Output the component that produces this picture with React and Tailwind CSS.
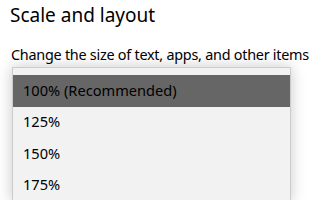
import React from 'react';

const options = ['100% (Recommended)', '125%', '150%', '175%'];

export default function App() {
    return (
        <div className="w-[317px] h-[200px] overflow-hidden bg-white text-black" style={{ fontFamily: '"Noto Sans", "Open Sans", sans-serif' }}>
            <div className="pl-[10px] pt-[1px] text-[19px] leading-[28px]">Scale and layout</div>
            <div className="pl-[11px] mt-[16px] text-[14.4px] leading-[20px] tracking-[-0.25px] whitespace-nowrap">
                Change the size of text, apps, and other items
            </div>
            <div className="ml-[12px] mt-[2px] w-[279px] bg-[#f2f2f2] border border-[#cccccc] pt-[7px] shadow-[0_0_14px_rgba(0,0,0,0.22)]">
                {options.map((opt, i) => (
                    <div
                        key={opt}
                        className={`h-[31.5px] flex items-center pl-[10px] text-[14.6px] ${i === 0 ? 'bg-[#666666] text-black' : ''}`}
                    >
                        {opt}
                    </div>
                ))}
            </div>
        </div>
    );
}
